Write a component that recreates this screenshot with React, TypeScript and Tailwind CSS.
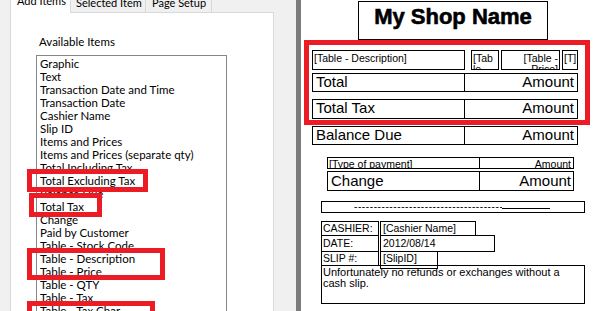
import React from 'react';

const items = [
  'Graphic',
  'Text',
  'Transaction Date and Time',
  'Transaction Date',
  'Cashier Name',
  'Slip ID',
  'Items and Prices',
  'Items and Prices (separate qty)',
  'Total Including Tax',
  'Total Excluding Tax',
  'Balance Due',
  'Total Tax',
  'Change',
  'Paid by Customer',
  'Table - Stock Code',
  'Table - Description',
  'Table - Price',
  'Table - QTY',
  'Table - Tax',
  'Table - Tax Char',
];

const ui = "font-['Lato','Liberation_Sans',sans-serif] text-[11.5px] text-black";
const rc = "font-['Liberation_Sans',Arial,sans-serif] text-black";

function BigRow({ label, className = '' }: { label: string; className?: string }) {
  return (
    <div className={`flex w-[266px] border border-black text-[15px] leading-[16px] ${className}`}>
      <div className="w-[152px] border-r border-black pl-[3px]">{label}</div>
      <div className="flex-1 text-right pr-[3px]">Amount</div>
    </div>
  );
}

function LeftPanel() {
  return (
    <div className={`relative w-[296px] h-full bg-[#f0f0f0] flex flex-col ${ui}`}>
      <div className="flex items-end h-[13px] pl-[10px] relative z-10 whitespace-nowrap text-[11px]">
        <div className="h-[20px] w-[61px] bg-white border-x border-[#d9d9d9] pl-[6px] leading-[15px] overflow-hidden">
          Add Items
        </div>
        <div className="h-[18px] w-[75px] mb-[1px] border-r border-[#d9d9d9] pl-[5px] leading-[15px] pt-[1px] overflow-hidden">
          Selected Item
        </div>
        <div className="h-[18px] w-[66px] mb-[1px] border-r border-[#d9d9d9] pl-[6px] leading-[15px] pt-[1px] overflow-hidden">
          Page Setup
        </div>
      </div>
      <div className="ml-[10px] w-[264px] flex-1 -mt-px border border-[#d9d9d9] bg-white flex flex-col">
        <div className="mt-[21px] ml-[28px] leading-[15px]">Available Items</div>
        <div className="mt-[6px] ml-[25px] w-[191px] flex-1 border border-[#828790] pl-[3px] pt-[1px]">
          {items.map((t) => (
            <div key={t} className="leading-[13px] whitespace-nowrap">
              {t}
            </div>
          ))}
        </div>
      </div>
      <div className="absolute left-[27px] top-[169px] w-[121px] h-[23px] border-[5px] border-[#ed1c24]" />
      <div className="absolute left-[29px] top-[193px] w-[73px] h-[24px] border-[5px] border-[#ed1c24]" />
      <div className="absolute left-[27px] top-[248px] w-[138px] h-[32px] border-[5px] border-[#ed1c24]" />
      <div className="absolute left-[27px] top-[301px] w-[128px] h-[25px] border-[5px] border-[#ed1c24]" />
    </div>
  );
}

function Receipt() {
  return (
    <div className={`flex-1 h-full bg-white flex flex-col overflow-hidden ${rc}`}>
      <div className="mt-[1px] ml-[57px] w-[190px] h-[39px] border border-black text-center text-[22px] font-bold leading-[24px] pt-[3px] [-webkit-text-stroke:0.6px_black]">
        My Shop Name
      </div>
      <div className="ml-[3px] w-[286px] h-[85px] border-[5px] border-[#ed1c24] pl-[3px] pt-[5px]">
        <div className="flex items-start text-[10.5px] leading-[11px]">
          <div className="w-[153px] h-[20px] border border-black pl-[1px] pt-[2px] overflow-hidden whitespace-nowrap">
            [Table - Description]
          </div>
          <div className="ml-[6px] w-[28px] h-[20px] border border-black pl-[1px] pt-[2px] overflow-hidden">
            [Tab
            <br />
            le
          </div>
          <div className="ml-[2px] w-[59px] h-[20px] border border-black pr-[1px] pt-[2px] text-right overflow-hidden">
            [Table -
            <br />
            Price]
          </div>
          <div className="ml-[2px] w-[16px] h-[20px] border border-black pl-[1px] pt-[2px] overflow-hidden">
            [T]
          </div>
        </div>
        <BigRow label="Total" className="mt-[3px] h-[19px]" />
        <BigRow label="Total Tax" className="mt-[7px] h-[20px]" />
      </div>
      <BigRow label="Balance Due" className="mt-[1px] ml-[11px] h-[19px]" />
      <div className="mt-[12px] ml-[26px] w-[247px] h-[12px] flex border border-black text-[10.5px] leading-[11px] overflow-hidden">
        <div className="w-[152px] border-r border-black pl-[1px] pt-[1px] whitespace-nowrap underline">
          [Type of payment]
        </div>
        <div className="flex-1 text-right pr-[2px] pt-[1px] underline">Amount</div>
      </div>
      <div className="mt-[2px] ml-[26px] w-[247px] h-[20px] flex border border-black text-[15px] leading-[17px]">
        <div className="w-[152px] border-r border-black pl-[3px]">Change</div>
        <div className="flex-1 text-right pr-[2px]">Amount</div>
      </div>
      <div className="mt-[10px] ml-[20px] w-[264px] h-[12px] border border-black flex items-end pl-[32px]">
        <div className="flex items-end h-[10px]">
          <span className="w-[148px] overflow-hidden text-[10px] leading-[10px] tracking-[0.6px] whitespace-nowrap">
            --------------------------------------------------------
          </span>
          <span className="inline-block w-[48px] border-b border-black mb-[3px]" />
        </div>
      </div>
      <div className="mt-[8px] ml-[20px] flex flex-col text-[10.5px] leading-[12px]">
        <div className="flex h-[15px] items-start">
          <div className="w-[58px] h-[15px] border border-black pl-[1px]">CASHIER:</div>
          <div className="ml-[1px] w-[96px] h-[15px] border border-black pl-[2px]">[Cashier Name]</div>
        </div>
        <div className="flex h-[17px] -mt-px items-start">
          <div className="w-[58px] h-[17px] border border-black pl-[1px] pt-[1px]">DATE:</div>
          <div className="ml-[1px] w-[115px] h-[17px] border border-black pl-[2px] pt-[1px]">2012/08/14</div>
        </div>
        <div className="flex h-[15px] -mt-px items-start">
          <div className="w-[58px] h-[15px] border border-black pl-[1px]">SLIP #:</div>
          <div className="ml-[1px] w-[58px] h-[18px] border border-black pl-[2px]">[SlipID]</div>
        </div>
        <div className="-mt-px w-[264px] h-[39px] border border-black pl-[1px] pr-[14px] text-[11px] leading-[11px] pt-[1px]">
          Unfortunately no refunds or exchanges without a cash slip.
        </div>
      </div>
    </div>
  );
}

export default function App() {
  return (
    <div className="flex w-[593px] h-[311px] overflow-hidden bg-white">
      <LeftPanel />
      <div className="w-[5px] h-full bg-[#7b7b7b]" />
      <Receipt />
    </div>
  );
}
